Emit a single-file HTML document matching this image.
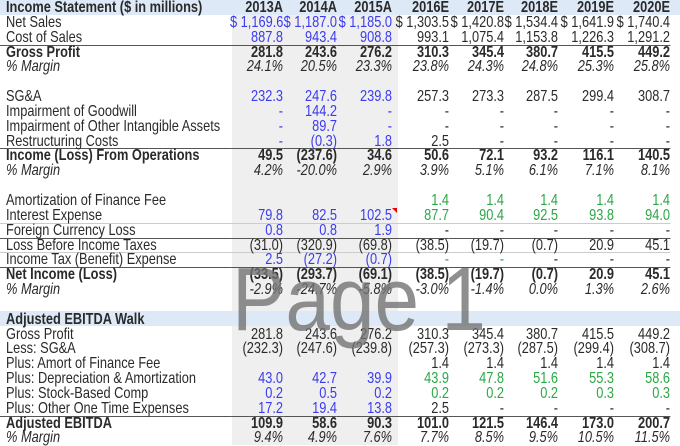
<html><head><style>
body{margin:0;width:680px;height:445px;overflow:hidden;background:#fff;font-family:"Liberation Sans",Arial,sans-serif;font-size:11.3px;color:#2a2a2a;position:relative}
.g{position:absolute;left:232px;top:15px;width:166px;height:430px;background:#efefef}
.hb{position:absolute;left:0;width:680px;height:15px;background:#dde9f6}
table{position:absolute;left:0;top:1px;border-collapse:collapse;width:837.5px;table-layout:fixed;transform:scaleX(0.8);transform-origin:0 0}
td{height:14.85px;padding:0;line-height:14.85px;white-space:nowrap;text-align:right;overflow:visible}
td:first-child{text-align:left;padding-left:7.5px}
tr.b td{font-weight:bold}
tr.i td{font-style:italic}
.bl{color:#3a3af0}.gr{color:#2aa845}
tr.lt td{box-shadow:inset 0 -1px #555}
tr.ll td{box-shadow:inset 0 -1px #ccc}
.wm{position:absolute;left:232px;top:255px;font-size:90px;line-height:90px;color:rgba(115,115,115,.8);transform:scaleX(0.89);transform-origin:0 0;white-space:nowrap}
.rt{position:absolute;left:392px;top:208px;width:0;height:0;border-left:5px solid transparent;border-top:5px solid #e00}
</style></head><body>
<div class="g"></div>
<div class="hb" style="top:0"></div>
<div class="hb" style="top:311px"></div>
<table>
<colgroup><col style="width:287.5px"><col style="width:66.25px"><col style="width:67.5px"><col style="width:68.75px"><col style="width:71.25px"><col style="width:68.75px"><col style="width:67.5px"><col style="width:70px"><col style="width:70px"></colgroup>
<tr class="b"><td>Income Statement ($ in millions)</td><td>2013A</td><td>2014A</td><td>2015A</td><td>2016E</td><td>2017E</td><td>2018E</td><td>2019E</td><td>2020E</td></tr>
<tr><td>Net Sales</td><td class="bl">$ 1,169.6</td><td class="bl">$ 1,187.0</td><td class="bl">$ 1,185.0</td><td>$ 1,303.5</td><td>$ 1,420.8</td><td>$ 1,534.4</td><td>$ 1,641.9</td><td>$ 1,740.4</td></tr>
<tr class="lt"><td>Cost of Sales</td><td class="bl">887.8</td><td class="bl">943.4</td><td class="bl">908.8</td><td>993.1</td><td>1,075.4</td><td>1,153.8</td><td>1,226.3</td><td>1,291.2</td></tr>
<tr class="b"><td>Gross Profit</td><td>281.8</td><td>243.6</td><td>276.2</td><td>310.3</td><td>345.4</td><td>380.7</td><td>415.5</td><td>449.2</td></tr>
<tr class="i"><td>% Margin</td><td>24.1%</td><td>20.5%</td><td>23.3%</td><td>23.8%</td><td>24.3%</td><td>24.8%</td><td>25.3%</td><td>25.8%</td></tr>
<tr><td>&nbsp;</td><td></td><td></td><td></td><td></td><td></td><td></td><td></td><td></td></tr>
<tr><td>SG&amp;A</td><td class="bl">232.3</td><td class="bl">247.6</td><td class="bl">239.8</td><td>257.3</td><td>273.3</td><td>287.5</td><td>299.4</td><td>308.7</td></tr>
<tr><td>Impairment of Goodwill</td><td class="bl">-</td><td class="bl">144.2</td><td class="bl">-</td><td>-</td><td>-</td><td>-</td><td>-</td><td>-</td></tr>
<tr><td>Impairment of Other Intangible Assets</td><td class="bl">-</td><td class="bl">89.7</td><td class="bl">-</td><td>-</td><td>-</td><td>-</td><td>-</td><td>-</td></tr>
<tr class="lt"><td>Restructuring Costs</td><td class="bl">-</td><td class="bl">(0.3)</td><td class="bl">1.8</td><td>2.5</td><td>-</td><td>-</td><td>-</td><td>-</td></tr>
<tr class="b"><td>Income (Loss) From Operations</td><td>49.5</td><td>(237.6)</td><td>34.6</td><td>50.6</td><td>72.1</td><td>93.2</td><td>116.1</td><td>140.5</td></tr>
<tr class="i"><td>% Margin</td><td>4.2%</td><td>-20.0%</td><td>2.9%</td><td>3.9%</td><td>5.1%</td><td>6.1%</td><td>7.1%</td><td>8.1%</td></tr>
<tr><td>&nbsp;</td><td></td><td></td><td></td><td></td><td></td><td></td><td></td><td></td></tr>
<tr><td>Amortization of Finance Fee</td><td></td><td></td><td></td><td class="gr">1.4</td><td class="gr">1.4</td><td class="gr">1.4</td><td class="gr">1.4</td><td class="gr">1.4</td></tr>
<tr class="ll"><td>Interest Expense</td><td class="bl">79.8</td><td class="bl">82.5</td><td class="bl">102.5</td><td class="gr">87.7</td><td class="gr">90.4</td><td class="gr">92.5</td><td class="gr">93.8</td><td class="gr">94.0</td></tr>
<tr class="lt"><td>Foreign Currency Loss</td><td class="bl">0.8</td><td class="bl">0.8</td><td class="bl">1.9</td><td>-</td><td>-</td><td>-</td><td>-</td><td>-</td></tr>
<tr class="ll"><td>Loss Before Income Taxes</td><td>(31.0)</td><td>(320.9)</td><td>(69.8)</td><td>(38.5)</td><td>(19.7)</td><td>(0.7)</td><td>20.9</td><td>45.1</td></tr>
<tr class="lt"><td>Income Tax (Benefit) Expense</td><td class="bl">2.5</td><td class="bl">(27.2)</td><td class="bl">(0.7)</td><td class="gr">-</td><td class="gr">-</td><td>-</td><td>-</td><td>-</td></tr>
<tr class="b"><td>Net Income (Loss)</td><td>(33.5)</td><td>(293.7)</td><td>(69.1)</td><td>(38.5)</td><td>(19.7)</td><td>(0.7)</td><td>20.9</td><td>45.1</td></tr>
<tr class="i"><td>% Margin</td><td>-2.9%</td><td>-24.7%</td><td>-5.8%</td><td>-3.0%</td><td>-1.4%</td><td>0.0%</td><td>1.3%</td><td>2.6%</td></tr>
<tr><td>&nbsp;</td><td></td><td></td><td></td><td></td><td></td><td></td><td></td><td></td></tr>
<tr class="b"><td>Adjusted EBITDA Walk</td><td></td><td></td><td></td><td></td><td></td><td></td><td></td><td></td></tr>
<tr><td>Gross Profit</td><td>281.8</td><td>243.6</td><td>276.2</td><td>310.3</td><td>345.4</td><td>380.7</td><td>415.5</td><td>449.2</td></tr>
<tr><td>Less: SG&amp;A</td><td>(232.3)</td><td>(247.6)</td><td>(239.8)</td><td>(257.3)</td><td>(273.3)</td><td>(287.5)</td><td>(299.4)</td><td>(308.7)</td></tr>
<tr><td>Plus: Amort of Finance Fee</td><td></td><td></td><td></td><td>1.4</td><td>1.4</td><td>1.4</td><td>1.4</td><td>1.4</td></tr>
<tr><td>Plus: Depreciation &amp; Amortization</td><td class="bl">43.0</td><td class="bl">42.7</td><td class="bl">39.9</td><td class="gr">43.9</td><td class="gr">47.8</td><td class="gr">51.6</td><td class="gr">55.3</td><td class="gr">58.6</td></tr>
<tr><td>Plus: Stock-Based Comp</td><td class="bl">0.2</td><td class="bl">0.5</td><td class="bl">0.2</td><td class="gr">0.2</td><td class="gr">0.2</td><td class="gr">0.2</td><td class="gr">0.3</td><td class="gr">0.3</td></tr>
<tr class="lt"><td>Plus: Other One Time Expenses</td><td class="bl">17.2</td><td class="bl">19.4</td><td class="bl">13.8</td><td>2.5</td><td>-</td><td>-</td><td>-</td><td>-</td></tr>
<tr class="b"><td>Adjusted EBITDA</td><td>109.9</td><td>58.6</td><td>90.3</td><td>101.0</td><td>121.5</td><td>146.4</td><td>173.0</td><td>200.7</td></tr>
<tr class="i"><td>% Margin</td><td>9.4%</td><td>4.9%</td><td>7.6%</td><td>7.7%</td><td>8.5%</td><td>9.5%</td><td>10.5%</td><td>11.5%</td></tr>
</table>
<div class="rt"></div>
<div class="wm">Page 1</div>
</body></html>
